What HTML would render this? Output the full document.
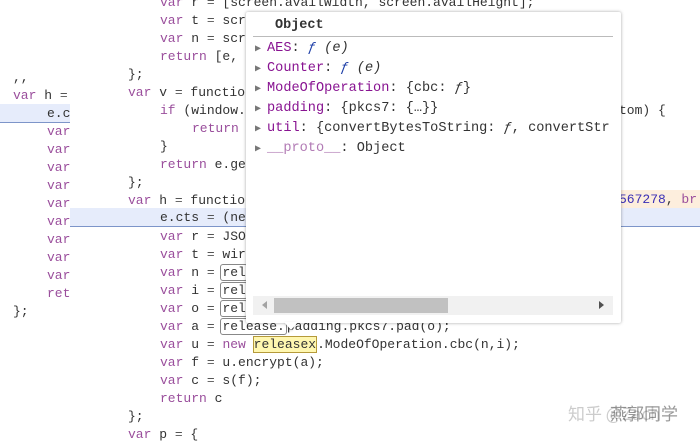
<!DOCTYPE html>
<html><head><meta charset="utf-8"><style>
body{margin:0;width:700px;height:444px;overflow:hidden;background:#fff;position:relative;font-family:"Liberation Mono",monospace;font-size:13px;color:#333}
.l{position:absolute;white-space:pre;line-height:18px;height:18px}
.k{color:#9a4e9c}
.n{color:#3a2fb5}
.o{color:#555}
.hl{position:absolute;background:#e6ecfb;border-bottom:1px solid #7d95c9}
.box{border:1px solid #888;border-radius:3px;padding:0 1px;margin-left:-2px}
#pop{position:absolute;left:246px;top:12px;width:375px;height:311px;background:#fff;box-shadow:0 0 3px rgba(0,0,0,.35);border-radius:2px;font-size:13.6px}
#pop .r{position:absolute;left:9px;white-space:pre;line-height:20px}
.t{color:#777;font-size:10px;display:inline-block;width:12px}
.p{color:#881391}
.f{color:#1d3ea7;font-style:italic}
</style></head><body>
<div class="hl" style="left:70px;top:208px;width:630px;height:18px"></div>
<div style="position:absolute;left:620px;top:190px;width:80px;height:18px;background:#fdeedd"></div>
<div class="l" style="left:160px;top:-6px"><span class="k">var</span> r <span class="o">=</span> [screen.availWidth, screen.availHeight];</div>
<div class="l" style="left:160px;top:12px"><span class="k">var</span> t <span class="o">=</span> scr</div>
<div class="l" style="left:160px;top:30px"><span class="k">var</span> n <span class="o">=</span> scr</div>
<div class="l" style="left:160px;top:48px"><span class="k">return</span> [e,</div>
<div class="l" style="left:128px;top:66px">};</div>
<div class="l" style="left:128px;top:84px"><span class="k">var</span> v <span class="o">=</span> functio</div>
<div class="l" style="left:160px;top:102px"><span class="k">if</span> (window.</div>
<div class="l" style="left:619px;top:102px">tom) {</div>
<div class="l" style="left:192px;top:120px"><span class="k">return</span></div>
<div class="l" style="left:160px;top:138px">}</div>
<div class="l" style="left:160px;top:156px"><span class="k">return</span> e.ge</div>
<div class="l" style="left:128px;top:174px">};</div>
<div class="l" style="left:128px;top:192px"><span class="k">var</span> h <span class="o">=</span> functio</div>
<div class="l" style="left:619px;top:191px"><span class="n">567278</span>, <span class="k">br</span></div>
<div class="l" style="left:160px;top:209px">e.cts <span class="o">=</span> (ne</div>
<div class="l" style="left:160px;top:228px"><span class="k">var</span> r <span class="o">=</span> JSO</div>
<div class="l" style="left:160px;top:246px"><span class="k">var</span> t <span class="o">=</span> wir</div>
<div class="l" style="left:160px;top:264px"><span class="k">var</span> n <span class="o">=</span> <span class="box">rel</span></div>
<div class="l" style="left:160px;top:282px"><span class="k">var</span> i <span class="o">=</span> <span class="box">rel</span></div>
<div class="l" style="left:160px;top:300px"><span class="k">var</span> o <span class="o">=</span> <span class="box">rel</span></div>
<div class="l" style="left:160px;top:318px"><span class="k">var</span> a <span class="o">=</span> <span class="box">release.</span>padding.pkcs7.pad(o);</div>
<div class="l" style="left:160px;top:336px"><span class="k">var</span> u <span class="o">=</span> <span class="k">new</span> <span style="background:#fff7b0;border:1px solid #b59a3a;margin-left:-1px">releasex</span>.ModeOfOperation.cbc(n,i);</div>
<div class="l" style="left:160px;top:354px"><span class="k">var</span> f <span class="o">=</span> u.encrypt(a);</div>
<div class="l" style="left:160px;top:372px"><span class="k">var</span> c <span class="o">=</span> s(f);</div>
<div class="l" style="left:160px;top:390px"><span class="k">return</span> c</div>
<div class="l" style="left:128px;top:408px">};</div>
<div class="l" style="left:128px;top:426px"><span class="k">var</span> p <span class="o">=</span> {</div>
<div style="position:absolute;left:0;top:0;width:70px;height:444px">
<div class="hl" style="left:0;top:104px;width:70px;height:18px"></div>
<div class="l" style="left:13px;top:69px">,,</div>
<div class="l" style="left:13px;top:87px"><span class="k">var</span> h <span class="o">=</span></div>
<div class="l" style="left:47px;top:105px">e.c</div>
<div class="l k" style="left:47px;top:123px">var</div>
<div class="l k" style="left:47px;top:141px">var</div>
<div class="l k" style="left:47px;top:159px">var</div>
<div class="l k" style="left:47px;top:177px">var</div>
<div class="l k" style="left:47px;top:195px">var</div>
<div class="l k" style="left:47px;top:213px">var</div>
<div class="l k" style="left:47px;top:231px">var</div>
<div class="l k" style="left:47px;top:249px">var</div>
<div class="l k" style="left:47px;top:267px">var</div>
<div class="l k" style="left:47px;top:285px">ret</div>
<div class="l" style="left:13px;top:303px">};</div>
</div>
<div id="pop">
<div style="position:absolute;left:29px;top:6px;font-weight:bold;font-size:13.5px">Object</div>
<div style="position:absolute;left:7px;top:24px;width:360px;height:1px;background:#bbb"></div>
<div class="r" style="top:27px"><span class="t">▶</span><span class="p">AES</span>: <span class="f">ƒ</span> <i>(e)</i></div>
<div class="r" style="top:47px"><span class="t">▶</span><span class="p">Counter</span>: <span class="f">ƒ</span> <i>(e)</i></div>
<div class="r" style="top:67px"><span class="t">▶</span><span class="p">ModeOfOperation</span>: {cbc: <i>ƒ</i>}</div>
<div class="r" style="top:87px"><span class="t">▶</span><span class="p">padding</span>: {pkcs7: {…}}</div>
<div class="r" style="top:107px;width:354px;overflow:hidden"><span class="t">▶</span><span class="p">util</span>: {convertBytesToString: <i>ƒ</i>, convertStringToBytes</div>
<div class="r" style="top:127px"><span class="t">▶</span><span style="color:#b27bb5">__proto__</span>: Object</div>
<div style="position:absolute;left:7px;top:284px;width:360px;height:19px;background:#f1f1f1"></div>
<div style="position:absolute;left:28px;top:286px;width:174px;height:15px;background:#c1c1c1"></div>
<div style="position:absolute;left:16px;top:289px;width:0;height:0;border-top:4px solid transparent;border-bottom:4px solid transparent;border-right:5px solid #a3a3a3"></div>
<div style="position:absolute;left:353px;top:289px;width:0;height:0;border-top:4px solid transparent;border-bottom:4px solid transparent;border-left:5px solid #505050"></div>
</div>
<div style="position:absolute;left:284px;top:322px;width:0;height:0;border-left:7px solid transparent;border-right:7px solid transparent;border-top:8px solid #fff;filter:drop-shadow(0 1px 1px rgba(0,0,0,.2))"></div>
<div style="position:absolute;left:568px;top:400px;font-family:'Noto Sans CJK SC',sans-serif;font-size:17px;color:#ccc;white-space:nowrap">知乎 @Zach</div>
<div style="position:absolute;left:610px;top:400px;font-family:'Noto Sans CJK SC',sans-serif;font-size:17px;color:#444;white-space:nowrap;opacity:.55">燕郭同学</div>
</body></html>
